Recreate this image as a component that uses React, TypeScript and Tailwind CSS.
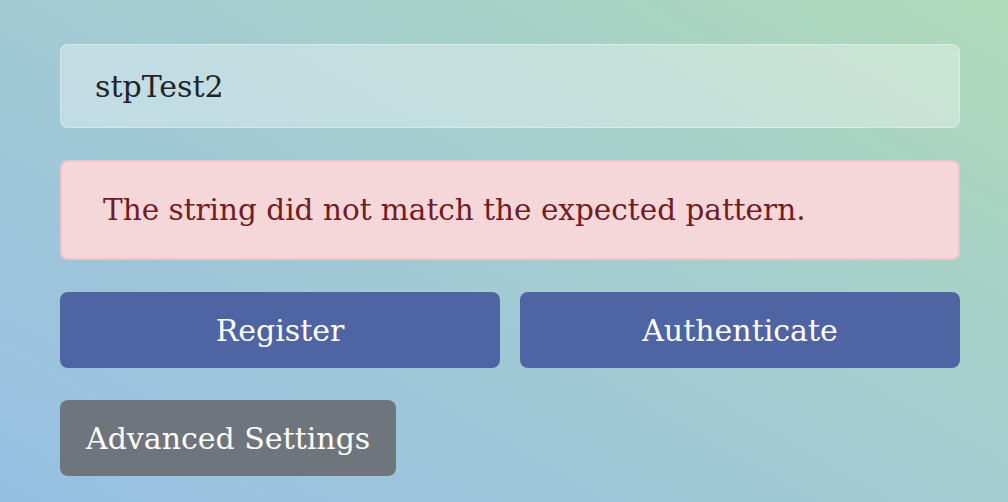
import React, { useState } from 'react';

const App: React.FC = () => {
  const [username, setUsername] = useState('stpTest2');

  return (
    <div
      className="min-h-[502px] w-full bg-[linear-gradient(30deg,#96c0e3_0%,#a2cbd3_50%,#afdab8_100%)] pl-[60px] pr-[48px] pt-[44px] pb-[26px]"
      style={{ fontFamily: '"DejaVu Serif", "Liberation Serif", serif' }}
    >
      <input
        value={username}
        onChange={(e) => setUsername(e.target.value)}
        className="block w-full h-[84px] rounded-[8px] border border-white/30 bg-white/35 px-[34px] text-[30px] text-[#212529] outline-none"
      />

      <div className="mt-[32px] flex h-[100px] items-center rounded-[8px] border-2 border-[#f1c4ca] bg-[#f5d7d9] px-[41px] text-[29.5px] text-[#721c24]">
        The string did not match the expected pattern.
      </div>

      <div className="mt-[32px] grid grid-cols-2 gap-[20px]">
        <button className="h-[76px] rounded-[8px] bg-[#4f64a3] text-[30px] text-white">Register</button>
        <button className="h-[76px] rounded-[8px] bg-[#4f64a3] text-[30px] text-white">Authenticate</button>
      </div>

      <button className="mt-[32px] h-[76px] rounded-[8px] bg-[#6f757d] px-[26px] text-[30px] text-white">
        Advanced Settings
      </button>
    </div>
  );
};

export default App;
